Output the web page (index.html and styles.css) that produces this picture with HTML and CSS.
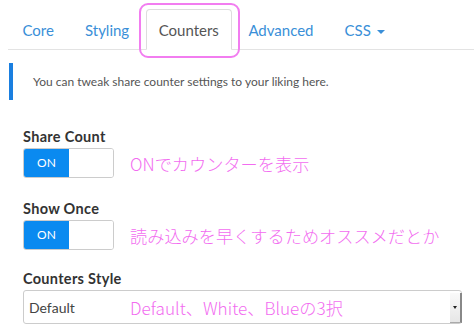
FILE: index.html
```html
<!DOCTYPE html>
<html lang="ja">

<head>
    <meta charset="UTF-8">
    <meta name="viewport" content="width=device-width, initial-scale=1.0">
    <title>Counters</title>

    <link rel="stylesheet" href="styles.css">
</head>

<body>
    <div class="page">
        <ul class="tabs">
            <li class="tab"><a>Core</a></li>
            <li class="tab"><a>Styling</a></li>
            <li class="tab active"><a>Counters</a><span class="mark"></span></li>
            <li class="tab"><a>Advanced</a></li>
            <li class="tab"><a>CSS <span class="caret"></span></a></li>
        </ul>

        <div class="info">You can tweak share counter settings to your liking here.</div>

        <div class="field">
            <label class="label">Share Count</label>
            <div class="row">
                <div class="toggle">
                    <span class="on">ON</span>
                    <span class="off"></span>
                </div>
                <span class="note">ONでカウンターを表示</span>
            </div>
        </div>

        <div class="field">
            <label class="label">Show Once</label>
            <div class="row">
                <div class="toggle">
                    <span class="on">ON</span>
                    <span class="off"></span>
                </div>
                <span class="note">読み込みを早くするためオススメだとか</span>
            </div>
        </div>

        <div class="field style">
            <label class="label">Counters Style</label>
            <div class="select">
                <span class="value">Default</span>
                <span class="note over">Default、White、Blueの3択</span>
                <span class="arrow"></span>
            </div>
        </div>
    </div>
</body>

</html>
```

FILE: styles.css
```css
* {
    padding: 0;
    margin: 0;
    box-sizing: border-box;
}

body {
    background-color: #fff;
    font-family: "Lato", "Liberation Sans", sans-serif;
    color: #333;
}

.page {
    padding: 9px 0 0 8px;
}

.tabs {
    list-style: none;
    display: flex;
    border-bottom: 1px solid #e3e3e3;
}

.tab {
    position: relative;
    margin-right: 2px;
    margin-bottom: -1px;
}

.tab a {
    display: block;
    padding: 10px 13.5px 9px;
    line-height: 20px;
    font-size: 15px;
    color: #3a8fd8;
    border: 1px solid transparent;
    border-radius: 4px 4px 0 0;
}

.tab.active a {
    color: #555;
    background-color: #fff;
    border-color: #ddd;
    border-bottom-color: transparent;
    padding-left: 12px;
    padding-right: 12px;
}

.mark {
    position: absolute;
    left: -7px;
    top: -6px;
    right: -8px;
    bottom: -8px;
    border: 2px solid #f27df0;
    border-radius: 9px;
}

.caret {
    display: inline-block;
    vertical-align: middle;
    border-top: 4px solid #3a8fd8;
    border-left: 4px solid transparent;
    border-right: 4px solid transparent;
    margin-left: 2px;
}

.info {
    margin: 13px 0 0 1px;
    border-left: 4px solid #1a7fe0;
    padding: 11px 20px 11px 20px;
    font-size: 12px;
    line-height: 15px;
    color: #555;
}

.field {
    padding-left: 15px;
    margin-top: 28px;
}

.field + .field {
    margin-top: 22px;
}

.field.style {
    margin-top: 20px;
}

.label {
    display: block;
    font-weight: bold;
    font-size: 14.5px;
    letter-spacing: 0.3px;
    line-height: 17px;
    color: #333;
    margin-bottom: 3px;
}

.row {
    display: flex;
    align-items: center;
}

.toggle {
    display: flex;
    width: 91px;
    height: 30px;
    border: 1px solid #ccc;
    border-radius: 3px;
    overflow: hidden;
}

.on {
    width: 45px;
    background-color: #0a8af0;
    color: #fff;
    font-size: 12px;
    line-height: 28px;
    text-align: center;
}

.off {
    flex: 1;
    background-color: #fff;
}

.note {
    margin-left: 16px;
    font-family: "Noto Sans CJK JP", sans-serif;
    font-weight: 300;
    font-size: 17.2px;
    color: #f26cf0;
    white-space: nowrap;
}

.select {
    position: relative;
    display: flex;
    align-items: center;
    width: 439px;
    height: 34px;
    border: 1px solid #ccc;
    border-radius: 3px;
    font-size: 14px;
    color: #444;
}

.value {
    padding-left: 5px;
}

.note.over {
    position: absolute;
    left: 106px;
    top: 4px;
    margin-left: 0;
}

.arrow {
    position: absolute;
    right: -1px;
    top: 2px;
    width: 12px;
    height: 30px;
    background: linear-gradient(#fafafa, #e6e6e6);
    border-right: 2px solid #888;
    border-bottom: 1px solid #aaa;
}

.arrow::after {
    content: "";
    position: absolute;
    left: 3px;
    top: 13px;
    border-top: 3px solid #222;
    border-left: 2px solid transparent;
    border-right: 2px solid transparent;
}
```
